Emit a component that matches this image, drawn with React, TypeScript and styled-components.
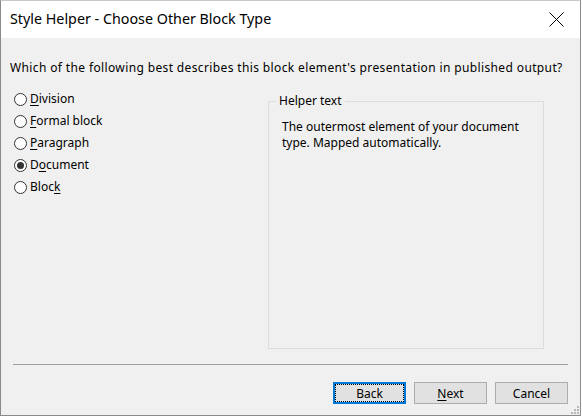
import React from "react";
import styled, { createGlobalStyle } from "styled-components";

const GlobalStyle = createGlobalStyle`
  html, body {
    margin: 0;
    padding: 0;
    background: #ffffff;
  }
  * {
    box-sizing: border-box;
  }
`;

const FONT = `"Noto Sans", "Open Sans", sans-serif`;

const Window = styled.div`
  width: 581px;
  height: 416px;
  display: flex;
  flex-direction: column;
  border: 1px solid #8a8a8a;
  border-top-color: #c8c8c8;
  background: #f0f0f0;
  font-family: ${FONT};
  color: #000;
`;

const TitleBar = styled.div`
  height: 37px;
  flex: none;
  display: flex;
  align-items: center;
  justify-content: space-between;
  background: #ffffff;
  padding-left: 9px;
`;

const Title = styled.div`
  font-size: 14.3px;
  line-height: 20px;
  padding-bottom: 1px;
`;

const CloseButton = styled.div`
  width: 48px;
  height: 37px;
  display: flex;
  align-items: center;
  justify-content: center;
`;

const Body = styled.div`
  flex: 1;
  position: relative;
  display: flex;
  flex-direction: column;
  padding: 22px 11px 0 9px;
`;

const Question = styled.div`
  font-size: 12px;
  letter-spacing: 0.37px;
  line-height: 16px;
  height: 16px;
  white-space: nowrap;
  margin-bottom: 12px;
`;

const Content = styled.div`
  display: flex;
  height: 261px;
`;

const RadioList = styled.div`
  width: 258px;
  padding-left: 4px;
  display: flex;
  flex-direction: column;
`;

const RadioRow = styled.label`
  height: 22px;
  display: flex;
  align-items: center;
  font-size: 12px;
  line-height: 16px;
`;

const RadioCircle = styled.span<{ $checked?: boolean }>`
  width: 13px;
  height: 13px;
  border-radius: 50%;
  border: 1px solid #333333;
  background: #ffffff;
  margin-right: 3px;
  display: flex;
  align-items: center;
  justify-content: center;
  &::after {
    content: "";
    display: ${({ $checked }) => ($checked ? "block" : "none")};
    width: 7px;
    height: 7px;
    border-radius: 50%;
    background: #333333;
  }
`;

const GroupBox = styled.fieldset`
  margin: 6px 0 0 0;
  width: 276px;
  height: 255px;
  padding: 0;
  border: 1px solid #dcdcdc;
`;

const Legend = styled.legend`
  font-size: 12px;
  line-height: 14px;
  margin-left: 7px;
  padding: 0 3px;
`;

const HelperText = styled.p`
  margin: 11px 0 0 13px;
  font-size: 12px;
  line-height: 16px;
`;

const Separator = styled.div`
  height: 1px;
  margin: 15px 1px 0 3px;
  background: #a0a0a0;
`;

const ButtonRow = styled.div`
  display: flex;
  justify-content: flex-end;
  gap: 8px;
  margin: 17px 1px 0 0;
`;

const Button = styled.div<{ $focused?: boolean }>`
  width: 73px;
  height: 22px;
  display: flex;
  align-items: center;
  justify-content: center;
  font-size: 12px;
  background: #e1e1e1;
  border: ${({ $focused }) => ($focused ? "2px solid #0078d7" : "1px solid #adadad")};
  outline: ${({ $focused }) => ($focused ? "1px dotted #000" : "none")};
  outline-offset: -3px;
`;

const Grip = styled.svg`
  position: absolute;
  right: 1px;
  bottom: 1px;
`;

const Key = styled.span`
  text-decoration: underline;
  text-underline-offset: 2px;
`;

const options: { pre: string; key: string; post: string; checked?: boolean }[] = [
  { pre: "", key: "D", post: "ivision" },
  { pre: "", key: "F", post: "ormal block" },
  { pre: "", key: "P", post: "aragraph" },
  { pre: "D", key: "o", post: "cument", checked: true },
  { pre: "Bloc", key: "k", post: "" },
];

export default function App() {
  return (
    <>
      <GlobalStyle />
      <Window>
        <TitleBar>
          <Title>Style Helper - Choose Other Block Type</Title>
          <CloseButton>
            <svg width="15" height="15" viewBox="0 0 15 15">
              <path d="M0.5 0.5 L14.5 14.5 M14.5 0.5 L0.5 14.5" stroke="#000" strokeWidth="1" fill="none" />
            </svg>
          </CloseButton>
        </TitleBar>
        <Body>
          <Question>
            Which of the following best describes this block element's presentation in published output?
          </Question>
          <Content>
            <RadioList>
              {options.map((o) => (
                <RadioRow key={o.pre + o.key + o.post}>
                  <RadioCircle $checked={o.checked} />
                  <span>
                    {o.pre}
                    <Key>{o.key}</Key>
                    {o.post}
                  </span>
                </RadioRow>
              ))}
            </RadioList>
            <GroupBox>
              <Legend>Helper text</Legend>
              <HelperText>
                The outermost element of your document
                <br />
                type. Mapped automatically.
              </HelperText>
            </GroupBox>
          </Content>
          <Separator />
          <ButtonRow>
            <Button $focused>Back</Button>
            <Button>
              <span>
                <Key>N</Key>ext
              </span>
            </Button>
            <Button>Cancel</Button>
          </ButtonRow>
          <Grip width="8" height="8" viewBox="0 0 8 8">
            <rect x="6" y="0" width="2" height="2" fill="#b8b8b8" />
            <rect x="3" y="3" width="2" height="2" fill="#b8b8b8" />
            <rect x="6" y="3" width="2" height="2" fill="#b8b8b8" />
            <rect x="0" y="6" width="2" height="2" fill="#b8b8b8" />
            <rect x="3" y="6" width="2" height="2" fill="#b8b8b8" />
            <rect x="6" y="6" width="2" height="2" fill="#b8b8b8" />
          </Grip>
        </Body>
      </Window>
    </>
  );
}
